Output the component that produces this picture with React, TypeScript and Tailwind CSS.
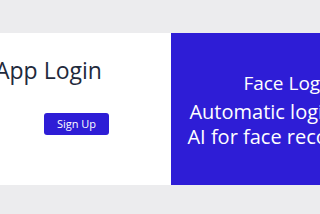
const App = () => {
  return (
    <div
      className="w-[320px] h-[214px] overflow-hidden bg-[#ececee] pt-[33px]"
      style={{ fontFamily: '"Open Sans", "Noto Sans", sans-serif' }}
    >
      <div className="flex h-[152px] w-[420px]">
        <div className="w-[171px] shrink-0 bg-white flex flex-col">
          <h1 className="ml-[-5px] mt-[22px] text-[23px] leading-[30px] text-[#1f2a3c] whitespace-nowrap">
            App Login
          </h1>
          <button
            type="button"
            className="ml-[44px] mt-[28px] w-[65px] h-[22px] rounded-[3px] bg-[#2e1dd6] text-white text-[11px] leading-[22px]"
          >
            Sign Up
          </button>
        </div>
        <div className="w-[238px] shrink-0 bg-[#2e1dd6] text-white text-center flex flex-col items-center pt-[38px]">
          <h2 className="text-[19px] leading-[24px] whitespace-nowrap">Face Login</h2>
          <p className="mt-[4px] w-[220px] text-[20px] leading-[25px]">
            Automatic login using AI for face recognition
          </p>
        </div>
      </div>
    </div>
  );
};

export default App;
